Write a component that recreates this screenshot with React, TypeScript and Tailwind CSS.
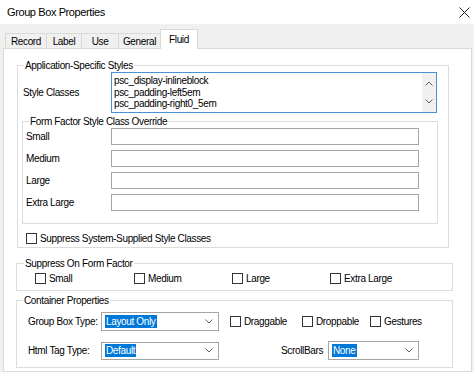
import React from 'react';

const GroupBox: React.FC<{ label: string; labelLeft: string; className: string; children?: React.ReactNode }> = ({
  label,
  labelLeft,
  className,
  children,
}) => (
  <div className={`relative border border-[#dcdcdc] ${className}`}>
    <span className={`absolute top-[-7px] ${labelLeft} bg-white px-[1px] leading-[13px] whitespace-nowrap`}>{label}</span>
    {children}
  </div>
);

const Check: React.FC<{ label: string; className?: string }> = ({ label, className = '' }) => (
  <div className={`flex items-center gap-[3px] whitespace-nowrap ${className}`}>
    <span className="w-[11px] h-[11px] border border-[#333333] bg-white shrink-0" />
    <span className="leading-[13px]">{label}</span>
  </div>
);

const Chevron: React.FC<{ up?: boolean; className?: string }> = ({ up, className = '' }) => (
  <svg width="8" height="5" viewBox="0 0 8 5" className={className}>
    <path d={up ? 'M0.5 4.5 L4 1 L7.5 4.5' : 'M0.5 0.5 L4 4 L7.5 0.5'} fill="none" stroke="#606060" strokeWidth="1" />
  </svg>
);

const Select: React.FC<{ value: string; className: string }> = ({ value, className }) => (
  <div className={`flex items-center justify-between border border-[#a5a5a5] bg-white pl-[3px] pr-[5px] ${className}`}>
    <span className="bg-[#0078d7] text-white leading-[13px] px-[1px]">{value}</span>
    <Chevron />
  </div>
);

const Field: React.FC<{ label: string }> = ({ label }) => (
  <div className="flex items-center">
    <span className="w-[85px] leading-[13px] whitespace-nowrap">{label}</span>
    <div className="w-[308px] h-[17px] border border-[#a5a5a5] bg-white" />
  </div>
);

const tabs = [
  { name: 'Record', w: 'w-[41px]' },
  { name: 'Label', w: 'w-[35px]' },
  { name: 'Use', w: 'w-[37px]' },
  { name: 'General', w: 'w-[42px]' },
];

export default function App() {
  return (
    <div className="w-[474px] h-[372px] overflow-hidden bg-[#f0f0f0] text-[10px] tracking-[-0.35px] text-black font-['Liberation_Sans',Arial,sans-serif]">
      <div className="h-[24px] bg-white flex items-center justify-between pl-[7px] pr-[4px]">
        <span className="text-[11px] tracking-[-0.4px] leading-[14px]">Group Box Properties</span>
        <svg width="11" height="11" viewBox="0 0 11 11">
          <path d="M0.5 0.5 L10.5 10.5 M10.5 0.5 L0.5 10.5" stroke="#222" strokeWidth="1" />
        </svg>
      </div>

      <div className="h-[24px] flex items-end pl-[5px] relative z-10">
        {tabs.map((t) => (
          <div
            key={t.name}
            className={`${t.w} h-[15px] flex items-center justify-center border-l border-t border-[#d9d9d9] bg-[#f0f0f0] leading-[13px]`}
          >
            {t.name}
          </div>
        ))}
        <div className="w-[38px] h-[20px] -mb-px flex justify-center pt-[3px] border-x border-t border-[#d9d9d9] bg-white leading-[13px]">
          Fluid
        </div>
      </div>

      <div className="ml-[3px] w-[469px] h-[324px] bg-white border border-[#d9d9d9] flex flex-col">
        <GroupBox label="Application-Specific Styles" labelLeft="left-[6px]" className="ml-[13px] mt-[16px] w-[432px] h-[183px]">
          <div className="flex items-center pl-[5px] mt-[6px]">
            <span className="w-[88px] leading-[13px]">Style Classes</span>
            <div className="w-[326px] h-[41px] border border-[#4a92d8] flex">
              <div className="flex-1 pl-[2px] pt-[2px] leading-[11.5px]">
                <div>psc_display-inlineblock</div>
                <div>psc_padding-left5em</div>
                <div>psc_padding-right0_5em</div>
              </div>
              <div className="w-[14px] bg-[#f0f0f0] flex flex-col items-center justify-between py-[8px]">
                <Chevron up />
                <Chevron />
              </div>
            </div>
          </div>

          <GroupBox label="Form Factor Style Class Override" labelLeft="left-[6px]" className="ml-[4px] mt-[8px] w-[416px] h-[103px]">
            <div className="flex flex-col gap-[5px] pl-[3px] pt-[6px]">
              <Field label="Small" />
              <Field label="Medium" />
              <Field label="Large" />
              <Field label="Extra Large" />
            </div>
          </GroupBox>

          <Check label="Suppress System-Supplied Style Classes" className="ml-[8px] mt-[8px]" />
        </GroupBox>

        <GroupBox label="Suppress On Form Factor" labelLeft="left-[7px]" className="ml-[12px] mt-[15px] w-[437px] h-[28px]">
          <div className="flex pl-[18px] pt-[8px]">
            <Check label="Small" className="w-[99px]" />
            <Check label="Medium" className="w-[98px]" />
            <Check label="Large" className="w-[98px]" />
            <Check label="Extra Large" />
          </div>
        </GroupBox>

        <GroupBox label="Container Properties" labelLeft="left-[6px]" className="ml-[12px] mt-[9px] w-[437px] h-[68px]">
          <div className="flex items-center pl-[11px] mt-[11px]">
            <span className="w-[73px] leading-[13px] whitespace-nowrap">Group Box Type:</span>
            <Select value="Layout Only" className="w-[118px] h-[19px]" />
            <Check label="Draggable" className="ml-[11px] w-[72px]" />
            <Check label="Droppable" className="w-[68px]" />
            <Check label="Gestures" />
          </div>
          <div className="flex items-center pl-[11px] mt-[10px]">
            <span className="w-[73px] leading-[13px] whitespace-nowrap">Html Tag Type:</span>
            <Select value="Default" className="w-[118px] h-[18px]" />
            <span className="ml-[62px] w-[47px] leading-[13px]">ScrollBars</span>
            <Select value="None" className="w-[91px] h-[19px]" />
          </div>
        </GroupBox>
      </div>
    </div>
  );
}
